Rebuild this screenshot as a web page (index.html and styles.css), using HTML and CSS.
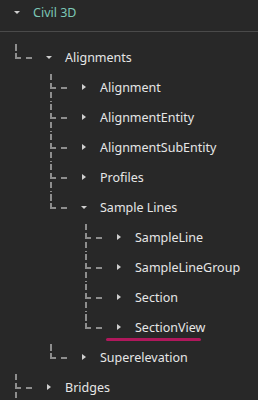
FILE: index.html
```html
<!DOCTYPE html>
<html lang="en">
<head>
  <meta charset="UTF-8" />
  <meta name="viewport" content="width=device-width, initial-scale=1.0" />
  <title>Civil 3D tree</title>
  <link rel="stylesheet" href="styles.css">
</head>
<body>
  <div class="panel">
    <div class="header">
      <span class="caret down"></span>
      <span class="title">Civil 3D</span>
    </div>

    <div class="tree">
      <div class="row lv0"><span class="conn elbow"></span><span class="caret down"></span><span class="label">Alignments</span></div>

      <div class="row lv1"><span class="conn tee"></span><span class="caret"></span><span class="label">Alignment</span></div>
      <div class="row lv1"><span class="conn tee"></span><span class="caret"></span><span class="label">AlignmentEntity</span></div>
      <div class="row lv1"><span class="conn tee"></span><span class="caret"></span><span class="label">AlignmentSubEntity</span></div>
      <div class="row lv1"><span class="conn tee"></span><span class="caret"></span><span class="label">Profiles</span></div>
      <div class="row lv1"><span class="conn elbow"></span><span class="caret down"></span><span class="label">Sample Lines</span></div>

      <div class="row lv2"><span class="conn tee"></span><span class="caret"></span><span class="label">SampleLine</span></div>
      <div class="row lv2"><span class="conn tee"></span><span class="caret"></span><span class="label">SampleLineGroup</span></div>
      <div class="row lv2"><span class="conn tee"></span><span class="caret"></span><span class="label">Section</span></div>
      <div class="row lv2 selected"><span class="conn elbow"></span><span class="caret"></span><span class="label">SectionView</span></div>

      <div class="row lv1"><span class="conn elbow"></span><span class="caret"></span><span class="label">Superelevation</span></div>

      <div class="row lv0"><span class="conn tee"></span><span class="caret"></span><span class="label">Bridges</span></div>
    </div>
  </div>
</body>
</html>
```

FILE: styles.css
```css
* { margin: 0; padding: 0; box-sizing: border-box; }
html, body { height: 100%; }
body {
  background: #282828;
  font-family: "Noto Sans", "Open Sans", sans-serif;
  font-size: 12.5px;
  color: #e6e6e6;
  overflow: hidden;
}
.panel { width: 258px; }

.header {
  display: flex;
  align-items: center;
  height: 25px;
  padding-left: 13px;
  border-bottom: 1px solid #4a4a4a;
  margin-top: 0;
  margin-bottom: 10px;
  height: 32px;
  padding-bottom: 7px;
}
.header .caret { margin-right: 12px; }
.title { color: #7cc7b6; }

.row {
  position: relative;
  display: flex;
  align-items: center;
  height: 30px;
  white-space: nowrap;
}
.lv0 { padding-left: 15px; }
.lv1 { padding-left: 50px; }
.lv2 { padding-left: 85px; }

/* tree connector: dashed vertical on the left, dashed stub to the right */
.conn {
  width: 30px;
  height: 100%;
  flex: none;
  background:
    repeating-linear-gradient(to bottom, #8e8e8e 0 6px, transparent 6px 9px) 0 2px / 2px 100% no-repeat,
    repeating-linear-gradient(to right, #8e8e8e 0 6px, transparent 6px 11px) 0 15px / 18px 2px no-repeat;
}
.conn.elbow {
  background:
    repeating-linear-gradient(to bottom, #8e8e8e 0 7px, transparent 7px 9px) 0 2px / 2px 15px no-repeat,
    repeating-linear-gradient(to right, #8e8e8e 0 6px, transparent 6px 11px) 0 15px / 18px 2px no-repeat;
}

.caret {
  width: 8px;
  height: 8px;
  flex: none;
  display: flex;
  align-items: center;
  justify-content: center;
}
.caret::before {
  content: "";
  border-top: 3px solid transparent;
  border-bottom: 3px solid transparent;
  border-left: 4px solid #cfcfcf;
}
.caret.down::before {
  border-left: 3px solid transparent;
  border-right: 3px solid transparent;
  border-top: 3px solid #cfcfcf;
  border-bottom: 0;
}

.label { margin-left: 12px; }

.selected::after {
  content: "";
  position: absolute;
  left: 106px;
  width: 95px;
  bottom: 1px;
  height: 3px;
  border-radius: 2px;
  background: #b0185c;
}
```
